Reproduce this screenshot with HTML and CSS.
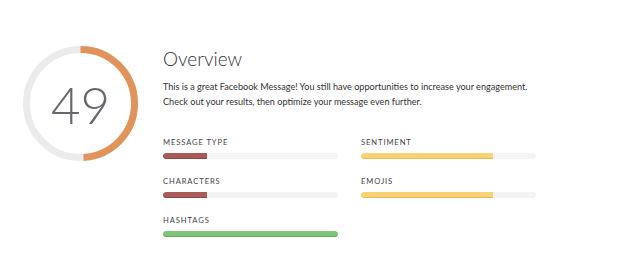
FILE: index.html
```html
<!DOCTYPE html>
<html>
<head>
<meta charset="utf-8">
<link rel="stylesheet" href="styles.css">
</head>
<body>
<div class="page">
  <div class="score">
    <svg class="ring" width="115" height="115" viewBox="0 0 115 115">
      <circle cx="57.5" cy="57.5" r="54" fill="none" stroke="#ebebeb" stroke-width="7"/>
      <circle cx="57.5" cy="57.5" r="54" fill="none" stroke="#e0935b" stroke-width="7"
        stroke-dasharray="166.25 339.29" transform="rotate(-90 57.5 57.5)"/>
    </svg>
    <div class="num">49</div>
  </div>
  <div class="content">
    <h1 class="title">Overview</h1>
    <p class="desc">This is a great Facebook Message! You still have opportunities to increase your engagement.<br>Check out your results, then optimize your message even further.</p>
    <div class="metrics">
      <div class="metric">
        <div class="label">MESSAGE TYPE</div>
        <div class="track"><div class="fill red" style="width:25%"></div></div>
      </div>
      <div class="metric">
        <div class="label">SENTIMENT</div>
        <div class="track"><div class="fill yellow" style="width:75.5%"></div></div>
      </div>
      <div class="metric">
        <div class="label">CHARACTERS</div>
        <div class="track"><div class="fill red" style="width:25%"></div></div>
      </div>
      <div class="metric">
        <div class="label">EMOJIS</div>
        <div class="track"><div class="fill yellow" style="width:75.5%"></div></div>
      </div>
      <div class="metric">
        <div class="label">HASHTAGS</div>
        <div class="track"><div class="fill green" style="width:100%"></div></div>
      </div>
    </div>
  </div>
</div>
</body>
</html>
```
FILE: styles.css
```css
html, body {
  margin: 0;
  padding: 0;
  background: #ffffff;
}
body {
  font-family: "Lato", "Open Sans", sans-serif;
  color: #333;
}
.page {
  display: flex;
  align-items: flex-start;
  padding: 46px 0 0 23px;
}
.score {
  display: grid;
  width: 115px;
  height: 115px;
  flex: none;
}
.ring, .num {
  grid-area: 1 / 1;
}
.num {
  align-self: center;
  justify-self: center;
  font-size: 51px;
  font-weight: 300;
  color: #67676f;
  line-height: 1;
  margin-top: 1px;
}
.content {
  margin-left: 25px;
}
.title {
  margin: 2px 0 0 0;
  font-size: 19px;
  font-weight: 300;
  line-height: 22px;
  color: #333;
}
.desc {
  margin: 10px 0 0 0;
  font-size: 9.1px;
  line-height: 14.5px;
  color: #333;
}
.metrics {
  display: grid;
  grid-template-columns: 175px 175px;
  column-gap: 23px;
  row-gap: 17px;
  margin-top: 28px;
}
.label {
  font-size: 7.6px;
  letter-spacing: 0.9px;
  line-height: 10px;
  color: #444;
}
.track {
  margin-top: 6px;
  height: 6px;
  border-radius: 3px;
  background: #f3f3f3;
  overflow: hidden;
}
.fill {
  height: 100%;
  border-radius: 3px 0 0 3px;
}
.fill.red {
  background: #a85b59;
  box-shadow: inset 0 -1px 0 #8f4644;
}
.fill.yellow {
  background: #f8d375;
  box-shadow: inset 0 -1px 0 #e7b94f;
}
.fill.green {
  background: #7dc577;
  border-radius: 3px;
  box-shadow: inset 0 -1px 0 #63ad5c;
}
```
